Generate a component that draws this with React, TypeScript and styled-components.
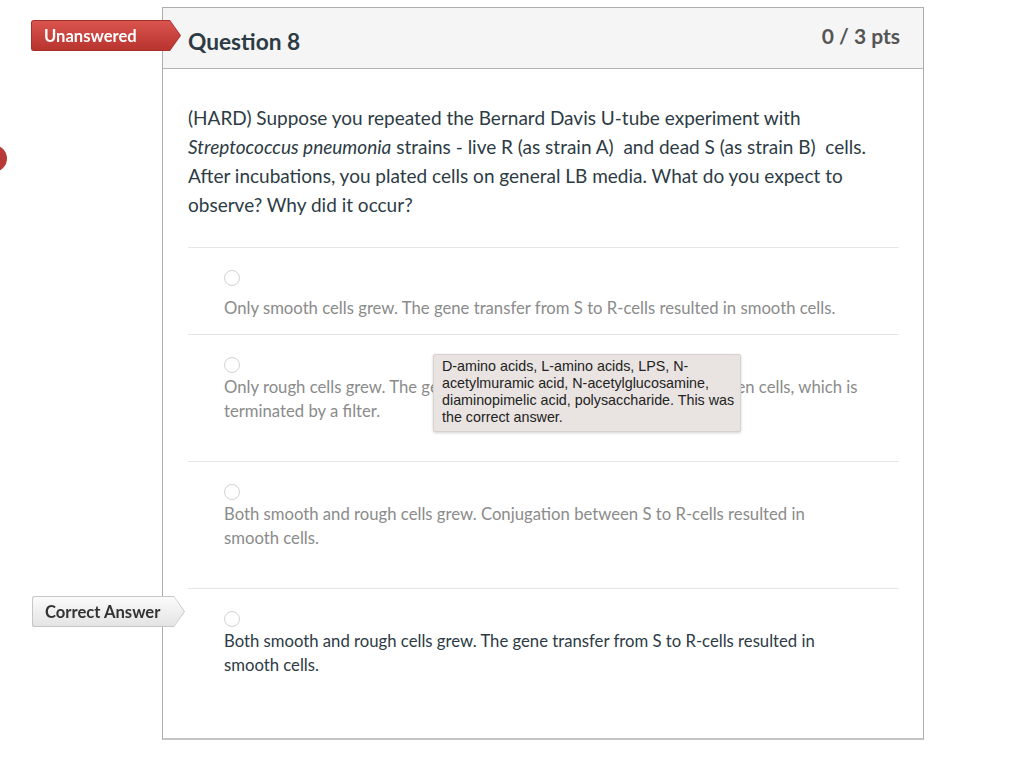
import styled, { createGlobalStyle } from "styled-components";

const GlobalStyle = createGlobalStyle`
  html, body {
    margin: 0;
    padding: 0;
    background: #fff;
    font-family: Lato, "Open Sans", sans-serif;
    color: #2d3b45;
  }
`;

const Page = styled.div`
  position: relative;
  width: 1024px;
  height: 776px;
  overflow: hidden;
  padding: 7px 0 0 162px;
  box-sizing: border-box;
`;

const EdgeDot = styled.div`
  position: absolute;
  left: -20px;
  top: 145px;
  width: 27px;
  height: 27px;
  border-radius: 50%;
  background: #b83a36;
`;

const Card = styled.div`
  position: relative;
  width: 762px;
  height: 733px;
  box-sizing: border-box;
  border: 1px solid #adadad;
  border-bottom-width: 2px;
  border-bottom-color: #c4c4c4;
  background: #fff;
`;

const Header = styled.div`
  position: relative;
  display: flex;
  justify-content: space-between;
  align-items: flex-start;
  height: 61px;
  box-sizing: border-box;
  padding: 0 23px 0 25px;
  background: #f5f5f5;
  border-bottom: 1px solid #b5b5b5;
`;

const Title = styled.h2`
  margin: 19px 0 0;
  font-size: 22.7px;
  font-weight: 700;
  line-height: 30px;
  color: #2d3b45;
`;

const Points = styled.div`
  margin-top: 14px;
  font-size: 21px;
  font-weight: 700;
  line-height: 28px;
  color: #555;
`;

const BadgeOuter = styled.div<{ $left: number; $top: number; $width: number; $edge: string }>`
  position: absolute;
  left: ${(p) => p.$left}px;
  top: ${(p) => p.$top}px;
  width: ${(p) => p.$width}px;
  height: 31px;
  background: ${(p) => p.$edge};
  clip-path: polygon(0 0, calc(100% - 11px) 0, 100% 50%, calc(100% - 11px) 100%, 0 100%);
  border-radius: 3px 0 0 3px;
  filter: drop-shadow(0 1px 1px rgba(0, 0, 0, 0.2));
`;

const BadgeInner = styled.div<{ $bg: string; $color: string }>`
  position: absolute;
  inset: 1px;
  display: flex;
  align-items: center;
  padding-left: 12px;
  box-sizing: border-box;
  background: ${(p) => p.$bg};
  color: ${(p) => p.$color};
  font-size: 16.6px;
  font-weight: 700;
  clip-path: polygon(0 0, calc(100% - 10px) 0, 100% 50%, calc(100% - 10px) 100%, 0 100%);
  border-radius: 2px 0 0 2px;
`;

const Body = styled.div`
  padding: 34px 24px 0 25px;
`;

const QuestionText = styled.p`
  margin: 0 0 28px;
  font-size: 19px;
  line-height: 29px;
  color: #2d3b45;
  em {
    font-style: italic;
  }
`;

const Answers = styled.div`
  display: flex;
  flex-direction: column;
`;

const Answer = styled.div<{ $tall?: boolean }>`
  position: relative;
  box-sizing: border-box;
  border-top: 1px solid #e6e6e6;
  padding: 22px 0 0 36px;
  height: ${(p) => (p.$tall ? 127 : 87)}px;
`;

const Radio = styled.span<{ $gap: number }>`
  display: block;
  width: 14px;
  height: 14px;
  border-radius: 50%;
  border: 1px solid #d2d2d2;
  background: #fff;
  margin-bottom: ${(p) => p.$gap}px;
`;

const AnswerText = styled.div<{ $faded?: boolean }>`
  font-size: 16.7px;
  line-height: 24px;
  color: ${(p) => (p.$faded ? "#8b8b8b" : "#2d3b45")};
  max-width: 637px;
`;

const Tooltip = styled.div`
  position: absolute;
  left: 245px;
  top: 19px;
  width: 308px;
  box-sizing: border-box;
  padding: 3px 1px 5px 8px;
  background: #e9e4e1;
  border: 1px solid #d8d2ce;
  border-radius: 2px;
  box-shadow: 0 1px 3px rgba(0, 0, 0, 0.18);
  font-family: "Liberation Sans", Arial, sans-serif;
  font-size: 14.3px;
  line-height: 17px;
  color: #222;
`;

export default function App() {
  return (
    <>
      <GlobalStyle />
      <Page>
        <EdgeDot />
        <Card>
          <Header>
            <BadgeOuter $left={-132} $top={12} $width={150} $edge="#a8302c">
              <BadgeInner
                $bg="linear-gradient(#d9534f, #b9332f)"
                $color="#fff"
              >
                Unanswered
              </BadgeInner>
            </BadgeOuter>
            <Title>Question 8</Title>
            <Points>0 / 3 pts</Points>
          </Header>
          <Body>
            <QuestionText>
              (HARD) Suppose you repeated the Bernard Davis U-tube experiment
              with <em>Streptococcus pneumonia</em> strains - live R (as strain
              A)&nbsp; and dead S (as strain B)&nbsp; cells. After incubations,
              you plated cells on general LB media. What do you expect to
              observe? Why did it occur?
            </QuestionText>
            <Answers>
              <Answer>
                <Radio $gap={10} />
                <AnswerText $faded>
                  Only smooth cells grew. The gene transfer from S to R-cells
                  resulted in smooth cells.
                </AnswerText>
              </Answer>
              <Answer $tall>
                <Radio $gap={2} />
                <AnswerText $faded>
                  Only rough cells grew. The gene transfer requires direct
                  contact between cells, which is terminated by a filter.
                </AnswerText>
                <Tooltip>
                  D-amino acids, L-amino acids, LPS, N-acetylmuramic acid,
                  N-acetylglucosamine, diaminopimelic acid, polysaccharide. This
                  was the correct answer.
                </Tooltip>
              </Answer>
              <Answer $tall>
                <Radio $gap={2} />
                <AnswerText $faded>
                  Both smooth and rough cells grew. Conjugation between S to
                  R-cells resulted in smooth cells.
                </AnswerText>
              </Answer>
              <Answer $tall>
                <BadgeOuter $left={-156} $top={7} $width={153} $edge="#c6c6c6">
                  <BadgeInner
                    $bg="linear-gradient(#fbfbfb, #e4e4e4)"
                    $color="#333"
                  >
                    Correct Answer
                  </BadgeInner>
                </BadgeOuter>
                <Radio $gap={2} />
                <AnswerText>
                  Both smooth and rough cells grew. The gene transfer from S to
                  R-cells resulted in smooth cells.
                </AnswerText>
              </Answer>
            </Answers>
          </Body>
        </Card>
      </Page>
    </>
  );
}
